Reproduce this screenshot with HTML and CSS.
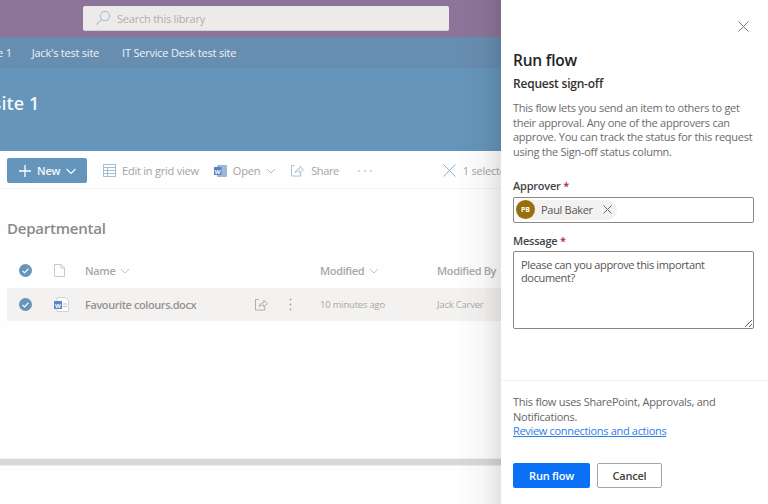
FILE: index.html
```html
<!DOCTYPE html>
<html lang="en">
<head>
<meta charset="utf-8">
<title>Run flow</title>
<link rel="stylesheet" href="styles.css">
</head>
<body>
<div class="app">
  <main class="page">
    <div class="suitebar">
      <div class="search">
        <svg class="search-icon" width="16" height="16" viewBox="0 0 16 16"><circle cx="10" cy="6" r="4.6" fill="none" stroke="#a9bfdc" stroke-width="1.1"/><path d="M6.6 9.4 1.5 14.5" stroke="#a9bfdc" stroke-width="1.1" fill="none"/></svg>
        <span>Search this library</span>
      </div>
    </div>
    <nav class="hubnav">
      <span class="hub-first">Site 1</span>
      <span>Jack's test site</span>
      <span>IT Service Desk test site</span>
    </nav>
    <header class="sitehead"><h1>Test site 1</h1></header>
    <div class="commands">
      <button class="new-btn">
        <svg width="14" height="14" viewBox="0 0 14 14"><path d="M7 1v12M1 7h12" stroke="#fff" stroke-width="1.3" fill="none"/></svg>
        <span>New</span>
        <svg width="12" height="12" viewBox="0 0 12 12"><path d="M1.5 4 6 8.5 10.500 4" stroke="#fff" stroke-width="1.100" fill="none"/></svg>
      </button>
      <div class="cmd cmd-grid">
        <svg width="13" height="13" viewBox="0 0 13 13"><path d="M.5.5h12v12H.5zM.5 3.500h12M.5 6.500h12M.5 9.500h12M4.500 3.500v9" stroke="#a5bdd4" fill="none"/></svg>
        <span>Edit in grid view</span>
      </div>
      <div class="cmd cmd-open">
        <svg width="13" height="12" viewBox="0 0 13 12"><rect x="3" y="0" width="10" height="12" rx="1" fill="#9db8dc"/><rect x="0" y="2" width="7.500" height="8" fill="#5b82bd"/><text x="3.750" y="8.500" class="word-mark">W</text></svg>
        <span>Open</span>
        <svg width="10" height="10" viewBox="0 0 10 10"><path d="M1 3 5 7 9 3" stroke="#bcbcbc" fill="none"/></svg>
      </div>
      <div class="cmd cmd-share">
        <svg width="13" height="12" viewBox="0 0 14 13"><path d="M4 .500H.500v11.500h10V8M4.500 8.500C5 5.500 7 4 9.500 4V1.500L13.500 5l-4 3.500V6.500C7.500 6.300 5.700 7 4.500 8.500Z" stroke="#a5bdd4" fill="none"/></svg>
        <span>Share</span>
      </div>
      <div class="cmd cmd-more">
        <svg width="14" height="2" viewBox="0 0 14 2"><circle cx="1" cy="1" r=".8" fill="#aaa"/><circle cx="7" cy="1" r=".8" fill="#aaa"/><circle cx="13" cy="1" r=".8" fill="#aaa"/></svg>
      </div>
      <div class="cmd cmd-selected">
        <svg width="13" height="13" viewBox="0 0 13 13"><path d="M.5.5l12 12M12.500.5l-12 12" stroke="#8fb0cc" fill="none"/></svg>
        <span>1 selected</span>
      </div>
    </div>
    <section class="library">
      <h2>Departmental</h2>
      <div class="row row-head">
        <div class="c-check"><svg class="tick" width="13" height="13" viewBox="0 0 13 13"><circle cx="6.500" cy="6.500" r="6.500" fill="#6595ba"/><path d="M3.500 6.800 5.600 8.900 9.500 4.600" stroke="#fff" stroke-width="1.200" fill="none"/></svg></div>
        <div class="c-type"><svg width="11" height="13" viewBox="0 0 11 13"><path d="M.5.5h6.500l3.500 3.500v8.500H.5zM7 .5V4h3.500" stroke="#c8c8c8" fill="none"/></svg></div>
        <div class="c-name">Name <svg width="10" height="10" viewBox="0 0 10 10"><path d="M1 3 5 7 9 3" stroke="#c4c4c4" fill="none"/></svg></div>
        <div class="c-mod">Modified <svg width="10" height="10" viewBox="0 0 10 10"><path d="M1 3 5 7 9 3" stroke="#c4c4c4" fill="none"/></svg></div>
        <div class="c-by">Modified By</div>
      </div>
      <div class="row row-item">
        <div class="c-check"><svg class="tick" width="13" height="13" viewBox="0 0 13 13"><circle cx="6.500" cy="6.500" r="6.500" fill="#6595ba"/><path d="M3.500 6.800 5.600 8.900 9.500 4.600" stroke="#fff" stroke-width="1.200" fill="none"/></svg></div>
        <div class="c-type"><svg width="15" height="15" viewBox="0 0 15 15"><path d="M3 .5h8l3.500 3.500v10.500H3z" fill="#fff" stroke="#cfd3d8"/><path d="M9 7h4M9 9.500h4" stroke="#a9c3e4"/><rect x="0" y="4" width="8" height="8" fill="#5c86c6"/><text x="4" y="10.500" class="word-mark">W</text></svg></div>
        <div class="c-name item-name">Favourite colours.docx</div>
        <div class="c-actions">
          <svg width="13" height="12" viewBox="0 0 14 13"><path d="M4 .500H.500v11.500h10V8M4.500 8.500C5 5.500 7 4 9.500 4V1.500L13.500 5l-4 3.500V6.500C7.500 6.300 5.700 7 4.500 8.500Z" stroke="#a8a8a8" fill="none"/></svg>
          <svg width="3" height="13" viewBox="0 0 3 13"><circle cx="1.500" cy="1.500" r=".9" fill="#a0a0a0"/><circle cx="1.500" cy="6.500" r=".9" fill="#a0a0a0"/><circle cx="1.500" cy="11.500" r=".9" fill="#a0a0a0"/></svg>
        </div>
        <div class="c-mod small">10 minutes ago</div>
        <div class="c-by small">Jack Carver</div>
      </div>
    </section>
    <div class="hscroll"></div>
    <div class="shade"></div>
  </main>
  <aside class="panel">
    <div class="panel-close">
      <svg width="11" height="11" viewBox="0 0 11 11"><path d="M.5.5l10 10M10.500.5l-10 10" stroke="#777" fill="none"/></svg>
    </div>
    <div class="panel-body">
      <h2 class="panel-title">Run flow</h2>
      <h3 class="panel-sub">Request sign-off</h3>
      <p class="panel-desc">This flow lets you send an item to others to get their approval. Any one of the approvers can approve. You can track the status for this request using the Sign-off status column.</p>
      <label class="field-label">Approver <em>*</em></label>
      <div class="picker">
        <div class="chip">
          <span class="avatar">PB</span>
          <span class="chip-name">Paul Baker</span>
          <svg width="9" height="9" viewBox="0 0 9 9"><path d="M.5.5l8 8M8.500.5l-8 8" stroke="#666" fill="none"/></svg>
        </div>
      </div>
      <label class="field-label label-message">Message <em>*</em></label>
      <textarea class="message">Please can you approve this important document?</textarea>
    </div>
    <div class="panel-foot">
      <p class="foot-note">This flow uses SharePoint, Approvals, and Notifications.<br><a href="#">Review connections and actions</a></p>
      <div class="foot-actions">
        <button class="btn-primary">Run flow</button>
        <button class="btn-default">Cancel</button>
      </div>
    </div>
  </aside>
</div>
</body>
</html>
```

FILE: styles.css
```css
* { box-sizing: border-box; }
html, body { margin: 0; height: 100%; overflow: hidden; }
body { font-family: "Open Sans", "Noto Sans", sans-serif; letter-spacing: -0.22px; color: #444; background: #fff; }
h1, h2, h3, p { margin: 0; }
button, textarea { font-family: inherit; letter-spacing: inherit; }

.app { display: flex; width: 768px; height: 504px; }

.page { position: relative; width: 501px; height: 504px; overflow: hidden; flex: none; display: flex; flex-direction: column; background: #fefefe; }

.suitebar { height: 37px; background: #8d7599; padding: 6px 0 0 83px; flex: none; }
.search { width: 366px; height: 25px; background: #edebe9; border-radius: 2px; border-bottom: 1px solid #d6d0d8; display: flex; align-items: center; gap: 6px; padding-left: 12px; font-size: 11px; color: #b0aeac; }

.hubnav { height: 31px; background: #678db0; display: flex; align-items: center; gap: 23px; font-size: 11px; color: #eef3f7; flex: none; margin-left: -15px; padding-bottom: 1px; }
.hub-first { margin-right: -3px; }

.sitehead { height: 84px; background: #6595ba; flex: none; border-bottom: 1px solid #fff; padding-top: 22px; margin-left: -49px; }
.sitehead h1 { font-size: 18px; font-weight: 600; letter-spacing: 0.1px; color: #f2f6f9; line-height: 26px; }

.commands { height: 37px; flex: none; display: flex; align-items: center; padding: 1px 0 0 7px; border-bottom: 1px solid #f5f5f5; font-size: 11px; color: #a3a3a3; white-space: nowrap; }
.new-btn { width: 80px; height: 25px; flex: none; background: #6595ba; border: 0; border-radius: 2px; color: #f4f7fa; font-size: 11px; font-weight: 600; display: flex; align-items: center; gap: 5px; padding: 0 0 0 11px; }
.cmd { display: flex; align-items: center; flex: none; }
.cmd-grid { margin-left: 16px; gap: 6px; }
.cmd-open { margin-left: 15px; gap: 6px; }
.cmd-share { margin-left: 15px; gap: 7px; letter-spacing: -0.4px; }
.cmd-more { margin-left: 19px; }
.cmd-selected { margin-left: 71px; gap: 7px; }
.word-mark { font-size: 6px; font-weight: 700; fill: #fff; text-anchor: middle; letter-spacing: 0; }

.library { padding: 28px 0 0 7px; }
.library h2 { font-size: 15px; font-weight: 600; color: #8a8a8a; line-height: 22px; margin-bottom: 17px; }

.row { display: flex; align-items: center; white-space: nowrap; }
.row-head { height: 29px; font-size: 11px; font-weight: 600; letter-spacing: -0.35px; color: #a8a8a8; }
.row-item { height: 33px; background: #f3f2f1; font-size: 11px; color: #8f8f8f; margin-top: 3px; }
.c-check { width: 47px; flex: none; padding-left: 12px; display: flex; }
.c-type { width: 31px; flex: none; display: flex; }
.c-name { width: 235px; flex: none; display: flex; align-items: center; gap: 5px; }
.item-name { width: 167px; font-size: 11px; font-weight: 600; letter-spacing: -0.42px; color: #939393; }
.c-actions { width: 68px; flex: none; display: flex; align-items: center; gap: 21px; padding-left: 3px; }
.c-mod { width: 117px; flex: none; display: flex; align-items: center; gap: 5px; }
.c-by { flex: none; }
.small { font-size: 9.500px; color: #a8a8a8; }

.hscroll { position: absolute; left: 0; right: 0; top: 458px; height: 8px; background: #d8d8d8; border-top: 1px solid #f0f0f0; border-bottom: 1px solid #ececec; }
.shade { position: absolute; right: 0; top: 0; bottom: 0; width: 44px; background: linear-gradient(to right, rgba(0,0,0,0), rgba(0,0,0,.03) 60%, rgba(0,0,0,.11)); pointer-events: none; }

.panel { width: 267px; height: 504px; flex: none; background: #fff; display: flex; flex-direction: column; }
.panel-close { height: 48px; padding: 21px 0 0 237px; flex: none; }
.panel-close svg { display: block; }
.panel-body { padding: 0 14px 0 12px; flex: 1; display: flex; flex-direction: column; }
.panel-title { font-size: 15.500px; font-weight: 600; color: #252423; line-height: 24px; }
.panel-sub { font-size: 12px; font-weight: 600; color: #323130; line-height: 22px; margin-top: 1px; }
.panel-desc { font-size: 11px; line-height: 14.700px; letter-spacing: -0.26px; color: #6b6b6b; margin: 6px -4px 0 0; }
.field-label { font-size: 11px; font-weight: 600; color: #444; line-height: 16px; margin-top: 18px; display: block; }
.field-label em { font-style: normal; color: #a4262c; }
.label-message { margin-top: 10px; }
.picker { height: 26px; border: 1px solid #8a8886; border-radius: 2px; margin-top: 3px; padding: 2px; display: flex; }
.chip { height: 20px; background: #f3f2f1; border-radius: 10px; display: flex; align-items: center; padding-right: 5px; }
.avatar { width: 19px; height: 19px; border-radius: 50%; background: #986f0b; color: #fff; font-size: 7px; font-weight: 700; letter-spacing: 0; display: flex; align-items: center; justify-content: center; }
.chip-name { font-size: 11px; letter-spacing: -0.3px; color: #555; margin: 0 10px 0 6px; }
.message { display: block; width: 241px; height: 78px; flex: none; border: 1px solid #8a8886; border-radius: 2px; margin: 2px 0 0; padding: 6px 7px; font-size: 11px; line-height: 13.500px; letter-spacing: -0.36px; color: #555; resize: both; outline: none; background: #fff; }

.panel-foot { height: 124px; flex: none; border-top: 1px solid #f3f2f1; padding: 14px 14px 0 12px; }
.foot-note { font-size: 11px; line-height: 14.700px; letter-spacing: -0.25px; color: #666; }
.foot-note a { color: #2b7de9; letter-spacing: -0.32px; }
.foot-actions { display: flex; gap: 7px; margin-top: 24px; }
.btn-primary { width: 77px; height: 25px; background: #0a70f5; color: #fff; border: 0; border-radius: 2px; font-size: 11px; font-weight: 600; padding: 0; }
.btn-default { width: 65px; height: 25px; background: #fff; color: #444; border: 1px solid #a8a6a4; border-radius: 2px; font-size: 11px; font-weight: 600; padding: 0; }
```
